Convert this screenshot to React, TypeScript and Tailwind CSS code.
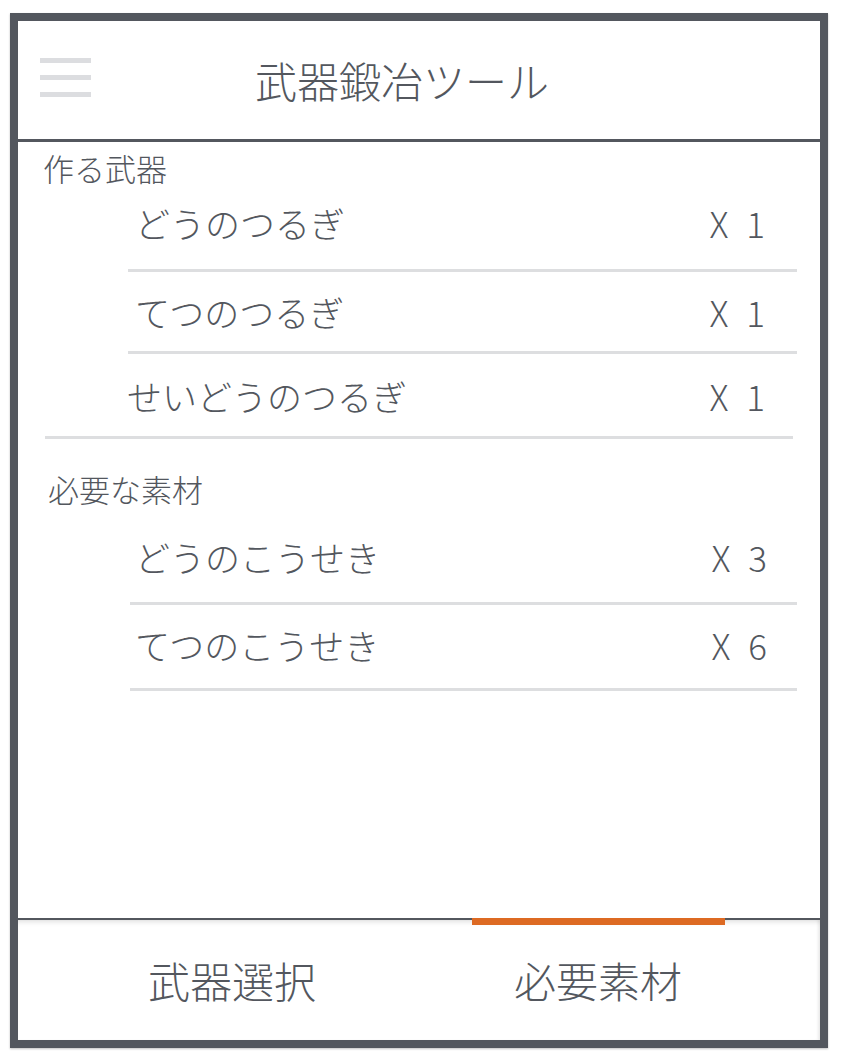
import React from "react";

type Row = {
  name: string;
  qty: string;
  // layout of the row and its divider, written out in full for Tailwind
  wrap: string;
  text: string;
};

const weapons: Row[] = [
  { name: "どうのつるぎ", qty: "X 1", wrap: "ml-[110px] mr-[23px] h-[85px] pb-[12px]", text: "pl-[7px] pr-[27px]" },
  { name: "てつのつるぎ", qty: "X 1", wrap: "ml-[110px] mr-[23px] h-[82px]", text: "pl-[7px] pr-[27px]" },
  { name: "せいどうのつるぎ", qty: "X 1", wrap: "ml-[27px] mr-[27px] h-[85px]", text: "pl-[82px] pr-[23px]" },
];

const materials: Row[] = [
  { name: "どうのこうせき", qty: "X 3", wrap: "ml-[112px] mr-[23px] h-[88px] pb-[7px]", text: "pl-[5px] pr-[25px]" },
  { name: "てつのこうせき", qty: "X 6", wrap: "ml-[112px] mr-[23px] h-[86px] pb-[5px]", text: "pl-[5px] pr-[25px]" },
];

const ListRow = ({ row }: { row: Row }) => (
  <div className={`flex items-center border-b-[3px] border-[#dddee0] ${row.wrap}`}>
    <div className={`flex flex-1 items-center justify-between ${row.text}`}>
      <span className="text-[35px] leading-none">{row.name}</span>
      <span className="text-[35px] leading-none tracking-[5px]">{row.qty}</span>
    </div>
  </div>
);

const Header = () => {
  return (
    <div className="flex h-[121px] shrink-0 items-center border-b-[3px] border-[#53575e] pl-[22px]">
      <div className="mb-[6px] flex w-[51px] flex-col gap-[12px]">
        <div className="h-[5px] bg-[#dcdde0]" />
        <div className="h-[5px] bg-[#dcdde0]" />
        <div className="h-[5px] bg-[#dcdde0]" />
      </div>
      <span className="ml-[164px] text-[42px] leading-none">武器鍛冶ツール</span>
    </div>
  );
};

const BottomBar = () => {
  const tabs = [
    { label: "武器選択", active: false },
    { label: "必要素材", active: true },
  ];
  return (
    <div className="flex h-[122px] shrink-0 border-t-2 border-[#53575e] pl-[31px] pr-[39px] shadow-[inset_0_5px_5px_-3px_rgba(0,0,0,0.12),inset_-3px_0_3px_-1px_rgba(0,0,0,0.08)]">
      {tabs.map((tab) => (
        <div key={tab.label} className="relative flex flex-1 items-center justify-center">
          {tab.active && <div className="absolute left-[57px] right-[56px] top-[-2px] h-[7px] bg-[#dd6a23]" />}
          <span className="text-[42px] leading-none">{tab.label}</span>
        </div>
      ))}
    </div>
  );
};

export default function App() {
  return (
    <div
      className="h-[1058px] w-[842px] bg-white pl-[10px] pt-[13px] text-[#53575e] font-light"
      style={{ fontFamily: '"Noto Sans CJK JP", "Noto Sans", sans-serif' }}
    >
      <div className="flex h-[1035px] w-[818px] flex-col border-[8px] border-[#53575e] shadow-[0_1px_2px_rgba(0,0,0,0.25)]">
        <Header />
        <div className="flex flex-1 flex-col">
          <div className="h-[45px] pl-[25px] pt-[10px] text-[31px] leading-none">作る武器</div>
          {weapons.map((row) => (
            <ListRow key={row.name} row={row} />
          ))}
          <div className="h-[78px] pl-[30px] pt-[34px] text-[31px] leading-none">必要な素材</div>
          {materials.map((row) => (
            <ListRow key={row.name} row={row} />
          ))}
        </div>
        <BottomBar />
      </div>
    </div>
  );
}
